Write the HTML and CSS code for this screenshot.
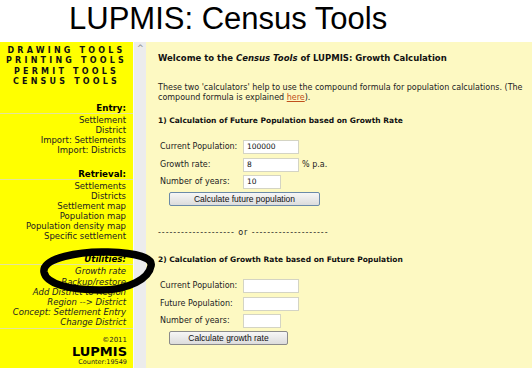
FILE: index.html
```html
<!DOCTYPE html>
<html>
<head>
<meta charset="utf-8">
<link rel="stylesheet" href="styles.css">
</head>
<body>
<div class="header"><h1>LUPMIS: Census Tools</h1></div>
<div class="main">
  <div class="sidebar">
    <div class="tools">
      <div>DRAWING TOOLS</div>
      <div>PRINTING TOOLS</div>
      <div>PERMIT TOOLS</div>
      <div>CENSUS TOOLS</div>
    </div>
    <div class="group entry">
      <div class="ghead">Entry:</div>
      <div>Settlement</div>
      <div>District</div>
      <div>Import: Settlements</div>
      <div>Import: Districts</div>
    </div>
    <div class="group retr">
      <div class="ghead">Retrieval:</div>
      <div>Settlements</div>
      <div>Districts</div>
      <div>Settlement map</div>
      <div>Population map</div>
      <div>Population density map</div>
      <div>Specific settlement</div>
    </div>
    <div class="group util">
      <div class="ghead">Utilities:</div>
      <div>Growth rate</div>
      <div>Backup/restore</div>
      <div>Add District to Region</div>
      <div>Region --&gt; District</div>
      <div>Concept: Settlement Entry</div>
      <div>Change District</div>
    </div>
    <div class="foot">
      <div class="copy">&copy;2011</div>
      <div class="brand">LUPMIS</div>
      <div class="counter">Counter:19549</div>
    </div>
  </div>
  <div class="gutter"><span class="arrow">&#94;</span></div>
  <div class="content">
    <p class="welcome">Welcome to the <i>Census Tools</i> of LUPMIS: Growth Calculation</p>
    <p class="intro">These two 'calculators' help to use the compound formula for population calculations. (The compound formula is explained <a href="#">here</a>).</p>
    <p class="sec">1) Calculation of Future Population based on Growth Rate</p>
    <div class="form">
      <label>Current Population:</label><div class="field"><span class="inp w55">100000</span></div>
      <label>Growth rate:</label><div class="field"><span class="inp w55">8</span><span class="unit">% p.a.</span></div>
      <label>Number of years:</label><div class="field"><span class="inp w37">10</span></div>
    </div>
    <div class="btnrow"><span class="btn b1">Calculate future population</span></div>
    <p class="or">-------------------- or --------------------</p>
    <p class="sec sec2">2) Calculation of Growth Rate based on Future Population</p>
    <div class="form">
      <label>Current Population:</label><div class="field"><span class="inp w55"></span></div>
      <label>Future Population:</label><div class="field"><span class="inp w55"></span></div>
      <label>Number of years:</label><div class="field"><span class="inp w37"></span></div>
    </div>
    <div class="btnrow"><span class="btn b2">Calculate growth rate</span></div>
  </div>
  <svg class="ring" width="120" height="56" viewBox="0 0 120 56"><path d="M 4 26 C 2 12, 40 5, 68 6 C 98 7, 113 12, 111 20 C 109 32, 90 44, 60 44 C 30 44, 6 38, 4 26 Z" fill="none" stroke="#000" stroke-width="7.5"/></svg>
</div>
</body>
</html>
```
FILE: styles.css
```css
html, body { margin: 0; padding: 0; background: #fff; }
body { width: 532px; height: 368px; overflow: hidden; font-family: "DejaVu Sans", Verdana, sans-serif; }
.header { height: 42px; }
.header h1 { margin: 0; padding: 2px 0 0 69px; font-family: "Liberation Sans", Arial, sans-serif; font-weight: normal; font-size: 31px; line-height: 34px; color: #000; white-space: nowrap; }
.main { display: flex; height: 326px; position: relative; }
.sidebar { width: 133px; background: #ffff00; display: flex; flex-direction: column; font-size: 8.5px; color: #222; }
.tools { text-align: center; font-weight: bold; letter-spacing: 3.2px; font-size: 8px; line-height: 10.4px; padding-top: 4px; color: #111; }
.group { text-align: right; padding-right: 7px; line-height: 10px; }
.ghead { font-weight: bold; color: #000; border-bottom: 1px solid #e4e49a; margin-right: -7px; padding-right: 7px; line-height: 9px; font-size: 8.7px; margin-bottom: 1px; }
.entry { margin-top: 16.4px; }
.retr { margin-top: 15.3px; line-height: 10px; }
.util { font-style: italic; margin-top: 14px; line-height: 10.2px; border-bottom: 1px solid #e4e49a; }
.foot { text-align: right; padding-right: 6px; margin-top: auto; padding-bottom: 1px; }
.copy { font-size: 7px; line-height: 9px; }
.brand { font-weight: bold; font-size: 13px; line-height: 13px; color: #000; }
.counter { font-size: 6.5px; line-height: 9px; }
.gutter { width: 12px; background: #ececec; border-left: 1px solid #fafafa; position: relative; }
.arrow { position: absolute; left: 3px; top: 3px; font-size: 8px; color: #888; line-height: 8px; }
.content { flex: 1; background: #fdf9c2; padding: 11px 6px 0 12px; font-size: 8px; line-height: 10px; color: #222; }
.content p { margin: 0; }
.welcome { font-weight: bold; color: #111; font-size: 8.5px; white-space: nowrap; }
.intro { margin-top: 20px !important; }
.intro a { color: #c0501c; }
.sec { font-weight: bold; font-size: 7.5px; margin-top: 13px !important; color: #111; }
.form { display: grid; grid-template-columns: 83px auto; row-gap: 3.5px; margin-top: 14px; padding-left: 2px; align-items: center; }
.field { display: flex; align-items: center; }
.inp { display: block; box-sizing: border-box; height: 14px; border: 1px solid #d4d4c4; background: #fff; font-size: 7.5px; line-height: 12px; padding-left: 3px; color: #111; }
.w55 { width: 56px; }
.w37 { width: 38px; }
.unit { margin-left: 3px; }
.btnrow { padding-left: 11px; margin-top: 3px; }
.btn { display: inline-block; box-sizing: border-box; height: 14px; border: 1px solid #6a8aa8; border-radius: 2px; background: linear-gradient(#f6f6f6, #dcdcdc); font-family: "Liberation Sans", Arial, sans-serif; font-size: 8.5px; line-height: 12px; text-align: center; color: #111; vertical-align: top; }
.b1 { width: 151px; }
.b2 { width: 119px; border-color: #8a8a8a; }
.or { margin-top: 22px !important; letter-spacing: 0.95px; }
.sec2 { margin-top: 17px !important; }
.ring { position: absolute; left: 40px; top: 204px; }
```
